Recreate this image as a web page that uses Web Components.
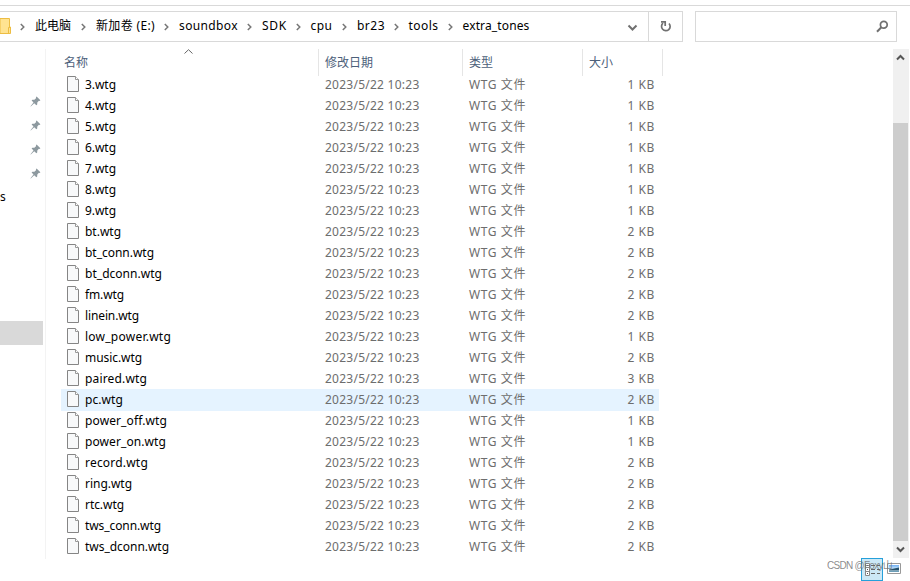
<!DOCTYPE html>
<html lang="zh-CN">
<head>
<meta charset="utf-8">
<title>extra_tones</title>
<style>
    html, body { margin: 0; height: 100%; overflow: hidden; background: #fff; }
    body { font: 12px/20px "Noto Sans", "Noto Sans CJK SC", sans-serif; color: #000; }
</style>
</head>
<body>
<file-explorer></file-explorer>

<script>
// Text that is spaced out to an exact width
class FitText extends HTMLElement {
    constructor() {
        super();
        this.attachShadow({ mode: 'open' });
        this.shadowRoot.innerHTML = `
            <style>
                :host { display: block; white-space: nowrap; }
                span { display: inline-block; }
            </style>
            <span><slot></slot></span>
        `;
    }

    connectedCallback() {
        const w = parseFloat(this.getAttribute('w'));
        const span = this.shadowRoot.querySelector('span');
        if (!w) return;
        const n = this.textContent.length;
        span.style.letterSpacing = ((w - span.getBoundingClientRect().width) / n) + 'px';
        this.style.width = w + 'px';
    }
}

class PathCrumb extends HTMLElement {
    constructor() {
        super();
        this.attachShadow({ mode: 'open' });
        this.shadowRoot.innerHTML = `
            <style>
                :host { display: flex; align-items: center; }
                svg { width: 5px; height: 8px; margin: 2px 10px 0 0; flex: none; }
            </style>
            <svg viewBox="0 0 5 8"><path d="M.8 1 3.8 4 .8 7" fill="none" stroke="#777" stroke-width="1.5"/></svg>
            <slot></slot>
        `;
    }
}

class AddressBar extends HTMLElement {
    constructor() {
        super();
        this.attachShadow({ mode: 'open' });
        this.shadowRoot.innerHTML = `
            <style>
                :host { display: flex; height: 31px; padding: 5px 12px 0 0; border-top: 1px solid #d9d9d9; }
                .path, .search { box-sizing: border-box; height: 31px; border: 1px solid #d9d9d9; display: flex; }
                .path { width: 683px; border-left: 0; margin-right: 12px; }
                .folder { width: 11px; height: 16px; margin: 6px 9px 0 0; }
                .crumbs { display: flex; flex: 1; height: 27px; }
                .drop { width: 11px; height: 8px; margin: 12px 10px 0 0; }
                .refresh { width: 34px; border-left: 1px solid #d9d9d9; box-sizing: border-box; }
                .refresh svg { width: 12px; height: 13px; margin: 8px 0 0 11px; display: block; }
                .search { width: 202px; justify-content: flex-end; }
                .search svg { width: 13px; height: 13px; margin: 8px 7px 0 0; }
            </style>
            <div class="path">
                <svg class="folder" viewBox="0 0 11 16"><path d="M0 .5H9.5V9H10.5V15.5H0Z" fill="#ffe391" stroke="#edbd42"/><path d="M8.5 15V9.5H10.5" fill="none" stroke="#edbd42"/></svg>
                <div class="crumbs"><slot></slot></div>
                <svg class="drop" viewBox="0 0 11 8"><path d="M1.5 1.5 5.5 5.5 9.5 1.5" fill="none" stroke="#707070" stroke-width="2"/></svg>
                <div class="refresh"><svg viewBox="0 0 12 13"><path d="M3 3.2A4.3 4.3 0 1 0 9 3.5" fill="none" stroke="#707070" stroke-width="1.7"/><path d="M1 1.8H5.2V6" fill="none" stroke="#707070" stroke-width="1.7"/></svg></div>
            </div>
            <div class="search"><svg viewBox="0 0 13 13"><circle cx="7.8" cy="4.8" r="3.4" fill="none" stroke="#707070" stroke-width="1.7"/><path d="M5.4 7.3 1 11.8" stroke="#707070" stroke-width="2"/></svg></div>
        `;
    }
}

class NavPane extends HTMLElement {
    constructor() {
        super();
        this.attachShadow({ mode: 'open' });
        const pin = `<svg viewBox="0 0 11 11"><path d="M6.6 .6 10.4 4.2 9.6 5 8.9 4.7 7.3 6.5 7.2 8.6 6.4 9.3 4.2 7.2 .8 10.4.5 10.2 3.5 6.5 1.6 4.6 2.4 3.8 4.4 3.8 6.2 2.1 5.9 1.3Z" fill="#8d999f"/></svg>`;
        this.shadowRoot.innerHTML = `
            <style>
                :host { display: block; width: 45px; height: 510px; border-right: 1px solid #f3f3f3; }
                .pins { display: grid; grid-auto-rows: 24px; padding: 47px 0 0 29.5px; }
                svg { width: 11px; height: 11px; }
                .label { height: 20px; margin-top: -5px; }
                .selected { width: 43px; height: 24px; background: #d9d9d9; margin-top: 114px; }
            </style>
            <div class="pins">${pin.repeat(4)}</div>
            <div class="label">s</div>
            <div class="selected"></div>
        `;
    }
}

class FileRow extends HTMLElement {
    constructor() {
        super();
        this.attachShadow({ mode: 'open' });
    }

    connectedCallback() {
        const { name, w, size } = this.dataset;
        this.shadowRoot.innerHTML = `
            <style>
                :host { display: grid; grid-template-columns: 24px 240px 144px 120px 66px; width: 598px; height: 21px; line-height: 21px; color: #6d6d6d; box-sizing: border-box; }
                :host([hover]) { background: #e5f3ff; box-shadow: 0 1px #e5f3ff; }
                svg { width: 12px; height: 16px; margin: 2px 0 0 6px; }
                .name { color: #000; }
                .size { justify-self: end; }
            </style>
            <svg viewBox="0 0 12 16"><path d="M.5 .5H8.5L11.5 3.5V15.5H.5Z" fill="#f8f9fa" stroke="#858585"/><path d="M8.5 .5V3.5H11.5" fill="#fff" stroke="#999"/></svg>
            <fit-text class="name" w="${w}">${name}</fit-text>
            <fit-text w="94.5">2023/5/22 10:23</fit-text>
            <fit-text w="57">WTG 文件</fit-text>
            <fit-text class="size" w="27.5">${size} KB</fit-text>
        `;
    }
}

class FileList extends HTMLElement {
    constructor() {
        super();
        this.attachShadow({ mode: 'open' });
        // name, text width, size in KB
        const files = [
            ['3', 31, 1], ['4', 31, 1], ['5', 31, 1], ['6', 31, 1], ['7', 31, 1], ['8', 31, 1], ['9', 31, 1],
            ['bt', 36, 2], ['bt_conn', 69, 2], ['bt_dconn', 77, 2], ['fm', 39, 2], ['linein', 54, 2],
            ['low_power', 86, 1], ['music', 57, 2], ['paired', 62, 3], ['pc', 38, 2], ['power_off', 82, 1],
            ['power_on', 81, 1], ['record', 63, 2], ['ring', 47, 2], ['rtc', 39, 2], ['tws_conn', 76, 2], ['tws_dconn', 84, 2]
        ];
        this.shadowRoot.innerHTML = `
            <style>
                :host { display: block; flex: 1; padding-left: 15px; }
                .head { display: grid; grid-template-columns: 258px 144px 120px 80px; height: 25px; color: #4c607a; }
                .head > div { border-right: 1px solid #e5e5e5; padding: 4px 0 0 6px; box-sizing: border-box; height: 27px; }
                .head > .first { padding: 0 0 0 3px; }
                .first svg { display: block; width: 9px; height: 5px; margin: 0 0 -1px 120px; }
            </style>
            <div class="head">
                <div class="first"><svg viewBox="0 0 9 5"><path d="M.5 4.5 4.5 .7 8.5 4.5" fill="none" stroke="#666"/></svg>名称</div>
                <div>修改日期</div><div>类型</div><div>大小</div>
            </div>
            ${files.map(([name, w, size]) => `<file-row data-name="${name}.wtg" data-w="${w}" data-size="${size}"${name === 'pc' ? ' hover' : ''}></file-row>`).join('')}
        `;
    }
}

class ScrollBar extends HTMLElement {
    constructor() {
        super();
        this.attachShadow({ mode: 'open' });
        this.shadowRoot.innerHTML = `
            <style>
                :host { display: flex; flex-direction: column; width: 16px; height: 509px; background: #f0f0f0; margin-right: 1px; }
                svg { width: 9px; height: 7px; margin: 5px 0 0 3px; }
                .thumb { width: 15px; height: 418px; margin-top: 62px; background: #cdcdcd; }
            </style>
            <svg viewBox="0 0 9 7"><path d="M1 5.5 4.5 2 8 5.5" fill="none" stroke="#555" stroke-width="2"/></svg>
            <div class="thumb"></div>
            <svg viewBox="0 0 9 7"><path d="M1 1.5 4.5 5 8 1.5" fill="none" stroke="#555" stroke-width="2"/></svg>
        `;
    }
}

class ViewModes extends HTMLElement {
    constructor() {
        super();
        this.attachShadow({ mode: 'open' });
        this.shadowRoot.innerHTML = `
            <style>
                :host { display: flex; justify-content: flex-end; position: relative; height: 23px; padding-right: 9px; }
                .details { box-sizing: border-box; width: 22px; height: 23px; border: 1px solid #26a0da; background: #cce8f6; }
                .details svg { display: block; width: 16px; height: 13px; margin: 4px 0 0 3px; }
                .large { width: 14px; height: 11px; margin: 5px 0 0 4px; }
                .mark { position: absolute; left: 827px; top: -2px; font: 10px/20px "Liberation Sans", "Noto Sans CJK SC", sans-serif; color: rgba(110, 110, 110, .8); }
            </style>
            <div class="details"><svg viewBox="0 0 16 13"><path d="M.5 .5H4.5V12.5H.5Z M.5 4.5H4.5 M.5 8.5H4.5" fill="#fff" stroke="#888"/><path d="M6 2.5H10M12 2.5H15M6 6.5H10M12 6.5H15M6 10.5H10M12 10.5H15" stroke="#666"/><path d="M2 2.5H3M2 6.5H3M2 10.5H3" stroke="#555"/></svg></div>
            <svg class="large" viewBox="0 0 14 11">
                <defs><linearGradient id="sky" x2="0" y2="1"><stop stop-color="#6fb0f5"/><stop offset="1" stop-color="#d4ebfa"/></linearGradient></defs>
                <path d="M.5 .5H13.5V10.5H.5Z" fill="#fff" stroke="#999"/><path d="M2 2H12V6H2Z" fill="url(#sky)"/><path d="M2 6.5 7 5.5 12 4.5V7.5H2Z" fill="#24506b"/><path d="M2 7.5H12V9H2Z" fill="#6d9fb8"/>
            </svg>
            <fit-text class="mark" w="65">CSDN @Foxy山</fit-text>
        `;
    }
}

class FileExplorer extends HTMLElement {
    constructor() {
        super();
        this.attachShadow({ mode: 'open' });
        // label, text width, gap to the next chevron
        const path = [
            ['此电脑', 36, 10], ['新加卷 (E:)', 59, 9], ['soundbox', 59, 9], ['SDK', 25, 8.5],
            ['cpu', 22, 9.5], ['br23', 28, 8.5], ['tools', 30, 9], ['extra_tones', 67, 0]
        ];
        this.shadowRoot.innerHTML = `
            <style>
                :host { display: block; width: 910px; height: 576px; padding-top: 5px; }
                main { display: flex; margin-top: 7px; height: 509px; }
            </style>
            <address-bar>
                ${path.map(([label, w, gap]) => `<path-crumb style="margin-right:${gap}px"><fit-text w="${w}">${label}</fit-text></path-crumb>`).join('')}
            </address-bar>
            <main>
                <nav-pane></nav-pane>
                <file-list></file-list>
                <scroll-bar></scroll-bar>
            </main>
            <view-modes></view-modes>
        `;
    }
}

customElements.define('fit-text', FitText);
customElements.define('path-crumb', PathCrumb);
customElements.define('address-bar', AddressBar);
customElements.define('nav-pane', NavPane);
customElements.define('file-row', FileRow);
customElements.define('file-list', FileList);
customElements.define('scroll-bar', ScrollBar);
customElements.define('view-modes', ViewModes);
customElements.define('file-explorer', FileExplorer);
</script>
</body>
</html>
